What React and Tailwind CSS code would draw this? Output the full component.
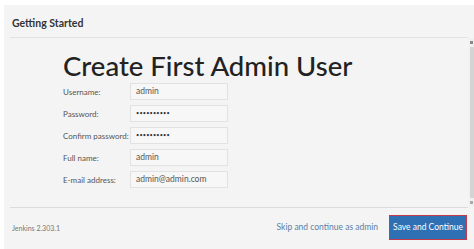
import React from "react";

const fields = [
  { label: "Username:", value: "admin" },
  { label: "Password:", value: "••••••••••", secret: true },
  { label: "Confirm password:", value: "••••••••••", secret: true },
  { label: "Full name:", value: "admin" },
  { label: "E-mail address:", value: "admin@admin.com" },
];

export default function App() {
  return (
    <div
      className="w-[474px] h-[249px] bg-white pt-[5px] pl-[4px] overflow-hidden"
      style={{ fontFamily: 'Lato, "Noto Sans", sans-serif' }}
    >
      <div className="h-full bg-[#f4f4f4] flex flex-col">
        <div className="h-[33px] flex items-center pl-[2px] pt-[5px] border-b border-[#e2e2e2] mx-[6px]">
          <span className="text-[10.5px] font-bold text-[#333]">Getting Started</span>
        </div>

        <div className="flex h-[169px]">
          <div className="flex-1 pl-[59px] pt-[13px]">
            <h1 className="text-[27.5px] leading-[30px] font-medium text-[#222] whitespace-nowrap">
              Create First Admin User
            </h1>
            <div className="mt-[2px] flex flex-col gap-[5px]">
              {fields.map((f) => (
                <div key={f.label} className="flex items-center h-[17px]">
                  <span className="w-[67px] text-[8px] text-[#555] whitespace-nowrap">{f.label}</span>
                  <div className="w-[98px] h-[17px] bg-[#f7f7f7] border border-[#e2e2e2] flex items-center pl-[5px]">
                    <span
                      className={
                        f.secret
                          ? "text-[5.5px] text-[#333] tracking-[0.2px]"
                          : "text-[8.5px] text-[#555]"
                      }
                    >
                      {f.value}
                    </span>
                  </div>
                </div>
              ))}
            </div>
          </div>
          <div className="w-[5px] bg-[#f0f0f0] flex flex-col justify-between items-center pt-[3px] pb-[3px]">
            <div className="w-[3px] h-[3px] bg-[#888]" />
            <div className="w-[4px] flex-1 my-[3px] bg-[#d4d4d4]" />
            <div className="w-[3px] h-[3px] bg-[#aaa]" />
          </div>
        </div>

        <div className="border-t border-[#dcdcdc] mx-[6px] flex-1 flex items-center justify-between pr-[1px]">
          <span className="pl-[2px] text-[7px] text-[#777]">Jenkins 2.303.1</span>
          <div className="flex items-center gap-[11px] mb-[2px]">
            <span className="text-[8.5px] text-[#5b7fa6] whitespace-nowrap">Skip and continue as admin</span>
            <button className="w-[78px] h-[25px] bg-[#2f6fb3] border border-[#c33a4c] text-white text-[8.5px] whitespace-nowrap flex items-center justify-center">
              Save and Continue
            </button>
          </div>
        </div>
      </div>
    </div>
  );
}
